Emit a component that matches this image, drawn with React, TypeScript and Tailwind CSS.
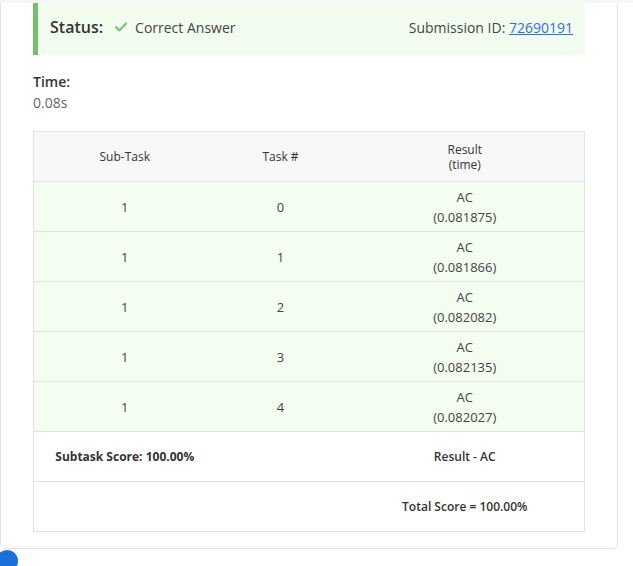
import { memo } from "react";

interface TestRow {
  subtask: number;
  task: number;
  time: string;
}

const rows: TestRow[] = [
  { subtask: 1, task: 0, time: "0.081875" },
  { subtask: 1, task: 1, time: "0.081866" },
  { subtask: 1, task: 2, time: "0.082082" },
  { subtask: 1, task: 3, time: "0.082135" },
  { subtask: 1, task: 4, time: "0.082027" },
];

function CheckIcon() {
  return (
    <svg width="12" height="10" viewBox="0 0 12 10" className="mr-2">
      <path
        d="M1 5.2 L4.3 8.4 L11 1.4"
        fill="none"
        stroke="#7cc576"
        strokeWidth="2.2"
        strokeLinecap="round"
        strokeLinejoin="round"
      />
    </svg>
  );
}

function StatusBar() {
  return (
    <div className="flex h-[52px] items-center justify-between border-l-[5px] border-[#76bf6a] bg-[#f2fdf0] pb-1 pl-3 pr-3">
      <div className="flex items-center">
        <span className="mr-[12px] text-[16px] font-semibold text-[#333]">
          Status:
        </span>
        <CheckIcon />
        <span className="text-[14px] text-[#444]">Correct Answer</span>
      </div>
      <div className="text-[14px] text-[#444]">
        Submission ID:{" "}
        <a href="#" className="text-[#2d6fcf] underline">
          72690191
        </a>
      </div>
    </div>
  );
}

function ResultTable() {
  return (
    <table className="w-full table-fixed border-collapse border border-[#e3e3e3] text-center">
      <colgroup>
        <col className="w-[182px]" />
        <col className="w-[130px]" />
        <col />
      </colgroup>
      <thead>
        <tr className="h-[50px] bg-[#f8f8f8] text-[12px] leading-[15px] text-[#333]">
          <th className="font-normal">Sub-Task</th>
          <th className="font-normal">Task #</th>
          <th className="font-normal">
            Result
            <br />
            (time)
          </th>
        </tr>
      </thead>
      <tbody>
        {rows.map((r) => (
          <tr
            key={r.task}
            className="h-[50px] border-t border-[#e3e3e3] bg-[#f3fdf0] text-[13px] leading-[20px] text-[#444]"
          >
            <td>{r.subtask}</td>
            <td>{r.task}</td>
            <td>
              AC
              <br />({r.time})
            </td>
          </tr>
        ))}
        <tr className="h-[50px] border-t border-[#e3e3e3] text-[12px] text-[#333]">
          <td className="font-bold">Subtask Score: 100.00%</td>
          <td />
          <td className="font-semibold">Result - AC</td>
        </tr>
        <tr className="h-[50px] border-t border-[#e3e3e3] text-[12px] text-[#333]">
          <td />
          <td />
          <td className="font-semibold">Total Score = 100.00%</td>
        </tr>
      </tbody>
    </table>
  );
}

function App() {
  return (
    <div
      className="relative h-[566px] overflow-hidden bg-white"
      style={{ fontFamily: '"Open Sans", "Noto Sans", sans-serif' }}
    >
      <div className="h-[3px] bg-[#f6f6f7]" />
      <div className="w-[618px] rounded-b-[5px] border-x border-b border-[#dfe2ec] px-8 pb-4">
        <StatusBar />
        <div className="mt-[16px] text-[14px] font-semibold text-[#333]">
          Time:
        </div>
        <div className="text-[14px] text-[#666]">0.08s</div>
        <div className="mt-[18px]">
          <ResultTable />
        </div>
      </div>
      <div className="absolute left-[-4px] top-[550px] h-[22px] w-[22px] rounded-full bg-[#1b6fd8]" />
    </div>
  );
}

export default memo(App);
